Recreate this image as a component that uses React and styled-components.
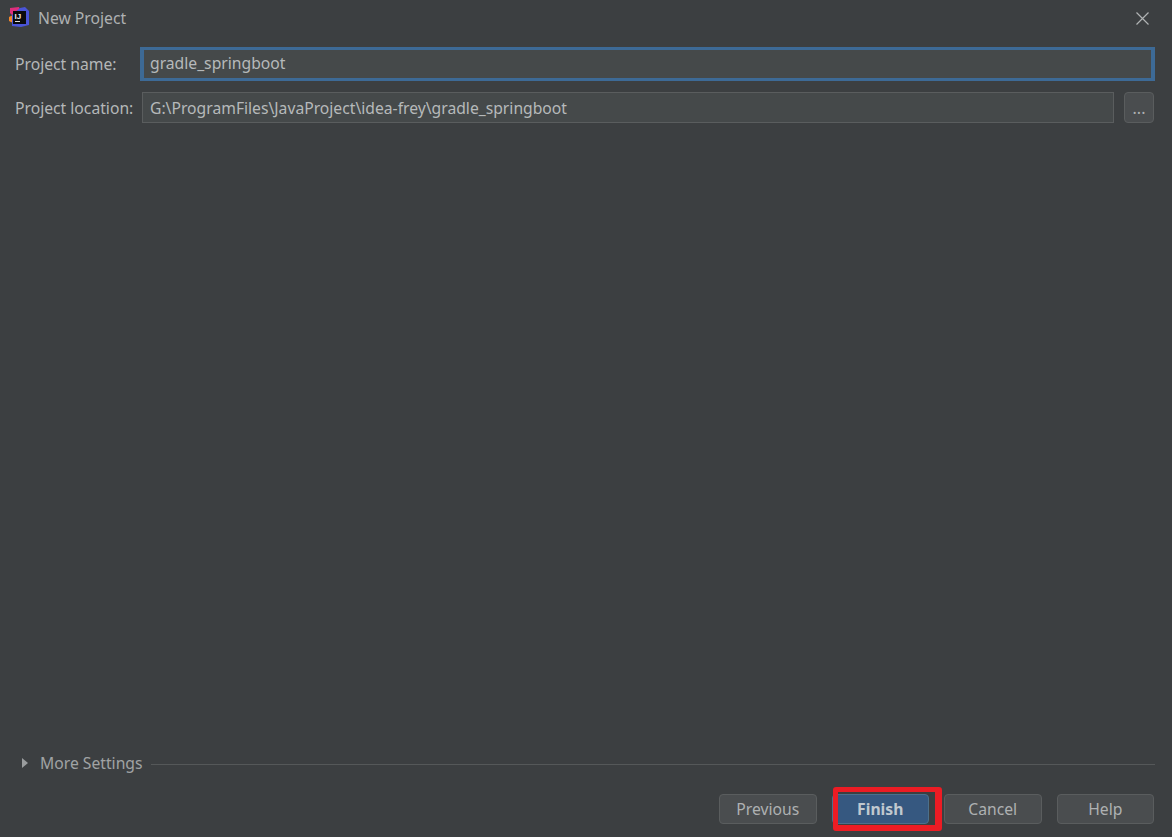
import React from 'react';
import styled, { createGlobalStyle } from 'styled-components';

const GlobalStyle = createGlobalStyle`
  html, body {
    margin: 0;
    height: 100%;
    background: #3c3f41;
  }
  #root {
    height: 100%;
  }
`;

const Dialog = styled.div`
  width: 1172px;
  height: 837px;
  box-sizing: border-box;
  display: flex;
  flex-direction: column;
  background: #3c3f41;
  color: #b4b7b8;
  font-family: "Noto Sans", "Open Sans", sans-serif;
  font-size: 15.7px;
  overflow: hidden;
`;

const TitleBar = styled.div`
  height: 36px;
  flex: none;
  display: flex;
  align-items: center;
  padding: 0 23px 0 8px;
`;

const Title = styled.div`
  margin-left: 8px;
  flex: 1;
  color: #aeb1b2;
`;

const Form = styled.div`
  flex: 1;
  display: flex;
  flex-direction: column;
  gap: 11px;
  padding: 11px 18px 0 15px;
`;

const Row = styled.div`
  display: flex;
  align-items: center;
  gap: 10px;
`;

const Label = styled.label`
  width: 117px;
  flex: none;
  color: #b4b7b8;
  white-space: nowrap;
`;

const Input = styled.div`
  flex: 1;
  box-sizing: border-box;
  height: ${p => (p.$focused ? '34px' : '31px')};
  margin: ${p => (p.$focused ? '0 -1px 0 -2px' : '0')};
  padding: ${p => (p.$focused ? '0 6px 2px' : '0 7px')};
  display: flex;
  align-items: center;
  background: #45494a;
  border: 1px solid #5a5d5e;
  border-color: ${p => (p.$focused ? '#3d6a96' : '#5a5d5e')};
  border-width: ${p => (p.$focused ? '3px 4px' : '1px')};
  color: #b6b9ba;
`;

const BrowseButton = styled.div`
  width: 30px;
  height: 31px;
  flex: none;
  box-sizing: border-box;
  display: flex;
  align-items: flex-end;
  justify-content: center;
  padding-bottom: 7px;
  background: #4a4d4f;
  border: 1px solid #5a5d5e;
  border-radius: 4px;
  color: #aeb1b2;
  font-size: 16px;
  line-height: 13px;
`;

const MoreSettings = styled.div`
  flex: none;
  display: flex;
  align-items: center;
  height: 20px;
  padding: 0 17px 0 22px;
  color: #a0a3a4;
`;

const MoreLabel = styled.span`
  margin-left: 12px;
  margin-right: 8px;
`;

const Divider = styled.div`
  flex: 1;
  height: 1px;
  margin-top: 2px;
  background: #555859;
`;

const Footer = styled.div`
  flex: none;
  display: flex;
  justify-content: flex-end;
  gap: 15px;
  padding: 21px 18px 13px 0;
`;

const Button = styled.div`
  position: relative;
  width: 97.5px;
  height: 30px;
  box-sizing: border-box;
  display: flex;
  align-items: center;
  justify-content: center;
  border-radius: 4px;
  background: ${p => (p.$primary ? '#365880' : '#4a4d4f')};
  border: 1px solid ${p => (p.$primary ? '#4c708c' : '#5a5d5e')};
  color: ${p => (p.$primary ? '#c0c8cf' : '#aeb1b2')};
  font-weight: ${p => (p.$primary ? 700 : 400)};
`;

const Highlight = styled.div`
  position: absolute;
  top: -8px;
  left: 0.5px;
  width: 109px;
  height: 44px;
  box-sizing: border-box;
  border-style: solid;
  border-color: #ec1c24;
  border-width: 5px 7px 6px 5px;
  border-radius: 3px;
`;

function IdeaLogo() {
  return (
    <svg width="22" height="22" viewBox="0 0 22 22">
      <path d="M2 1 L11 0 L13 6 L4 8 L2 6 Z" fill="#dd2e7c" />
      <path d="M1 10 L5 8 L5 16 L1 14 Z" fill="#f5872b" />
      <path d="M12 1 L17 0 L21 4 L21 18 L13 20 L4 19 L4 8 Z" fill="#4a55d8" />
      <rect x="5" y="4" width="13" height="13" fill="#0b0b0d" />
      <rect x="7" y="14" width="5" height="1" fill="#ddd" />
      <text x="6.5" y="11.5" fontSize="8" fontWeight="700" fontFamily="Liberation Sans" fill="#eee">IJ</text>
    </svg>
  );
}

function CloseIcon() {
  return (
    <svg width="13" height="13" viewBox="0 0 13 13">
      <path d="M0.5 0.5 L12.5 12.5 M12.5 0.5 L0.5 12.5" stroke="#b0b3b4" strokeWidth="1.2" fill="none" />
    </svg>
  );
}

function Arrow() {
  return (
    <svg width="6" height="10" viewBox="0 0 6 10">
      <path d="M0 0 L6 5 L0 10 Z" fill="#9a9d9e" />
    </svg>
  );
}

export default function App() {
  return (
    <Dialog>
      <GlobalStyle />
      <TitleBar>
        <IdeaLogo />
        <Title>New Project</Title>
        <CloseIcon />
      </TitleBar>
      <Form>
        <Row>
          <Label>Project name:</Label>
          <Input $focused>gradle_springboot</Input>
        </Row>
        <Row>
          <Label>Project location:</Label>
          <Input>G:\ProgramFiles\JavaProject\idea-frey\gradle_springboot</Input>
          <BrowseButton>...</BrowseButton>
        </Row>
      </Form>
      <MoreSettings>
        <Arrow />
        <MoreLabel>More Settings</MoreLabel>
        <Divider />
      </MoreSettings>
      <Footer>
        <Button>Previous</Button>
        <Button $primary>
          Finish
          <Highlight />
        </Button>
        <Button>Cancel</Button>
        <Button>Help</Button>
      </Footer>
    </Dialog>
  );
}
